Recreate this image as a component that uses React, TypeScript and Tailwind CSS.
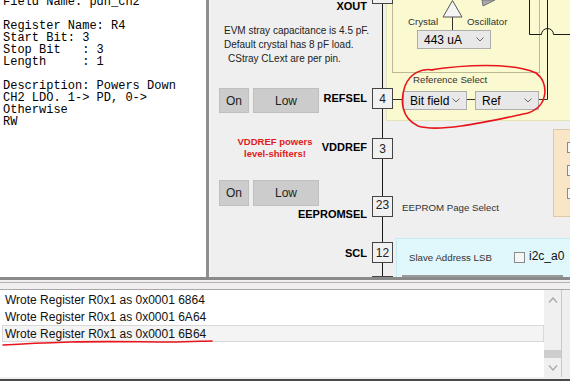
import React from "react";

const regLines = [
  "Field Name: pdn_ch2",
  "",
  "Register Name: R4",
  "Start Bit: 3",
  "Stop Bit   : 3",
  "Length     : 1",
  "",
  "Description: Powers Down",
  "CH2 LDO. 1-> PD, 0->",
  "Otherwise",
  "RW",
];

const logLines = [
  "Wrote Register R0x1 as 0x0001 6864",
  "Wrote Register R0x1 as 0x0001 6A64",
  "Wrote Register R0x1 as 0x0001 6B64",
];

function Chevron() {
  return (
    <svg width="8" height="5" viewBox="0 0 8 5" className="shrink-0">
      <polyline points="0.5,0.5 4,4 7.5,0.5" fill="none" stroke="#666" strokeWidth="1" />
    </svg>
  );
}

function Select({ label, className }: { label: string; className: string }) {
  return (
    <div
      className={`absolute h-[19px] flex items-center justify-between pl-[6px] pr-[6px] bg-[#e8e8e8] border border-[#adadad] text-[12px] text-black ${className}`}
    >
      <span>{label}</span>
      <Chevron />
    </div>
  );
}

function PinBox({ n, top }: { n: string; top: string }) {
  return (
    <div
      className={`absolute left-[162px] w-[21px] h-[21px] bg-[#f1f1f1] border-[1.5px] border-[#444] flex items-center justify-center text-[12px] text-[#222] ${top}`}
    >
      {n}
    </div>
  );
}

function PinLabel({ text, top }: { text: string; top: string }) {
  return (
    <div className={`absolute right-[203px] text-[11px] leading-[13px] font-bold text-black ${top}`}>
      {text}
    </div>
  );
}

function Check({ className }: { className: string }) {
  return <div className={`absolute w-[11px] h-[11px] bg-[#f6f6f6] border border-[#8a8a8a] ${className}`} />;
}

function OnLow({ top, h }: { top: string; h: string }) {
  return (
    <div className={`absolute left-[9px] flex gap-[4px] ${top}`}>
      <div className={`w-[30px] ${h} bg-[#cccccc] border border-[#bfbfbf] flex items-center justify-center text-[12px] text-[#222]`}>On</div>
      <div className={`w-[66px] ${h} bg-[#cccccc] border border-[#bfbfbf] flex items-center justify-center text-[12px] text-[#222]`}>Low</div>
    </div>
  );
}

function Schematic() {
  return (
    <div className="relative flex-1 h-full bg-[#efefef] overflow-hidden text-[#333]">
      {/* left notes */}
      <div className="absolute left-[14px] top-[24px] text-[10px] leading-[14px] text-[#222]">
        <div>EVM stray capacitance is 4.5 pF.</div>
        <div>Default crystal has 8 pF load.</div>
        <div className="pl-[4px]">CStray CLext are per pin.</div>
      </div>

      <OnLow top="top-[88px]" h="h-[25px]" />

      <div className="absolute left-[15px] top-[136px] w-[100px] text-center text-[9.5px] leading-[12px] font-bold text-[#e01b1b]">
        <div>VDDREF powers</div>
        <div>level-shifters!</div>
      </div>

      <OnLow top="top-[180px]" h="h-[26px]" />

      {/* yellow oscillator / reference area */}
      <div className="absolute left-[176px] top-0 w-[200px] h-[121px] bg-[#fbf9d0] border-l border-b border-[#e6e3b4]" />
      <div className="absolute left-[182px] top-[-1px] w-[148px] h-[74px] border border-[#bdb995]" />

      <div className="absolute left-[198px] top-[15px] text-[9.7px] leading-[14px]">Crystal</div>
      <div className="absolute left-[257px] top-[15px] text-[9.7px] leading-[14px]">Oscillator</div>
      <Select label="443 uA" className="left-[207px] top-[30px] w-[74px]" />

      <div className="absolute left-[203px] top-[73px] text-[9.7px] leading-[14px]">Reference Select</div>
      <Select label="Bit field" className="left-[193px] top-[91px] w-[64px]" />
      <Select label="Ref" className="left-[265px] top-[91px] w-[64px]" />

      {/* peach box */}
      <div className="absolute left-[343px] top-[129px] w-[30px] h-[88px] bg-[#f8e6c6] border border-[#dccaa5]" />
      <Check className="left-[357px] top-[142px]" />
      <Check className="left-[357px] top-[165px]" />
      <Check className="left-[357px] top-[188px]" />

      <div className="absolute left-[192px] top-[201px] text-[9.7px] leading-[14px]">EEPROM Page Select</div>

      {/* cyan box */}
      <div className="absolute left-[186px] top-[238px] w-[180px] h-[45px] bg-[#e0f7fc] border-l border-t border-[#c4ebf4]" />
      <div className="absolute left-[199px] top-[251px] text-[9.7px] leading-[14px]">Slave Address LSB</div>
      <Check className="left-[304px] top-[252px]" />
      <div className="absolute left-[319px] top-[249px] text-[12px] leading-[15px] text-[#111]">i2c_a0</div>
      <div className="absolute left-[192px] top-[275px] w-[161px] h-[2px] bg-[#9a9a9a]" />

      {/* wires */}
      <svg className="absolute inset-0 pointer-events-none" width="360" height="277">
        <line x1="172.5" y1="0" x2="172.5" y2="277" stroke="#1a1a1a" strokeWidth="1" />
        <line x1="183" y1="99.5" x2="193" y2="99.5" stroke="#333" strokeWidth="1" />
        <line x1="257" y1="99.5" x2="265" y2="99.5" stroke="#333" strokeWidth="1" />
        <line x1="329" y1="99.5" x2="337.5" y2="99.5" stroke="#333" strokeWidth="1" />
        <line x1="337.5" y1="0" x2="337.5" y2="99.5" stroke="#1a1a1a" strokeWidth="1" />
        <path d="M319.5 0 V34.5 H331.5 A6 6 0 0 1 343.5 34.5 H360" fill="none" stroke="#1a1a1a" strokeWidth="1" />
        <polygon points="242.5,0.5 233,17 252,17" fill="#f4f4f4" stroke="#555" strokeWidth="1" />
        <line x1="242.5" y1="17" x2="242.5" y2="30" stroke="#333" strokeWidth="1" />
        <polygon points="272,0 285,0 273,6" fill="#a8a8a8" stroke="#777" strokeWidth="1" />
      </svg>

      <PinBox n="" top="top-[-17px]" />
      <PinBox n="4" top="top-[88px]" />
      <PinBox n="3" top="top-[138px]" />
      <div className="absolute left-[162px] top-[196px] w-[21px] h-[21px] bg-[#f1f1f1] border-[1.5px] border-[#444] flex justify-center text-[12px] leading-[14px] pt-[1px] text-[#222]">
        23
      </div>
      <PinBox n="12" top="top-[242px]" />
      <PinBox n="" top="top-[276px]" />

      <PinLabel text="XOUT" top="top-[0px]" />
      <PinLabel text="REFSEL" top="top-[92px]" />
      <PinLabel text="VDDREF" top="top-[141px]" />
      <PinLabel text="EEPROMSEL" top="top-[208px]" />
      <PinLabel text="SCL" top="top-[247px]" />
    </div>
  );
}

function LogList() {
  return (
    <div className="flex h-[87px] bg-[#f0eeee]">
      <div className="flex w-[562px] bg-white border-r border-[#c8c8c8]">
        <div className="flex-1 pt-[1px] text-[12px] text-[#111]">
          {logLines.map((l, i) =>
            i === 2 ? (
              <div key={i} className="ml-[2px] h-[17px] flex items-center pl-[2px] bg-[#f4f4f4] border border-[#d8d8d8]">
                {l}
              </div>
            ) : (
              <div key={i} className="h-[17px] flex items-center pl-[5px]">
                {l}
              </div>
            )
          )}
        </div>
        <div className="w-[17px] bg-[#f0f0f0] flex flex-col items-center">
          <svg width="10" height="6" viewBox="0 0 10 6" className="mt-[7px]">
            <polyline points="1,5.5 5,1 9,5.5" fill="none" stroke="#a6a6a6" strokeWidth="1.2" />
          </svg>
          <div className="flex-1" />
          <div className="w-full h-[8px] bg-[#cdcdcd]" />
          <svg width="10" height="6" viewBox="0 0 10 6" className="mt-[7px] mb-[6px]">
            <polyline points="1,0.5 5,5 9,0.5" fill="none" stroke="#a6a6a6" strokeWidth="1.2" />
          </svg>
        </div>
      </div>
    </div>
  );
}

export default function App() {
  return (
    <div className="relative w-[570px] h-[381px] overflow-hidden bg-[#f0eeee] flex flex-col font-['Liberation_Sans',Arial,sans-serif]">
      <div className="flex h-[277px]">
        <div className="w-[206px] h-full bg-white overflow-hidden">
          <div className="mt-[-4px] pl-[3px] font-['Liberation_Mono',monospace] text-[12px] leading-[12px] text-black whitespace-pre">
            {regLines.map((l, i) => (
              <div key={i} className="h-[12px]">
                {l}
              </div>
            ))}
          </div>
        </div>
        <div className="w-[3px] h-full bg-[#8e8e8e]" />
        <div className="w-[1px] h-full bg-[#f6f6f6]" />
        <Schematic />
      </div>
      <div className="h-[3px] bg-[#8a8a8a]" />
      <div className="h-[2px] bg-[#f0eeee]" />
      <div className="h-[1px] bg-[#b4b4b4]" />
      <div className="h-[6px] bg-[#f0eeee]" />
      <div className="h-[1px] bg-[#a8a8a8]" />
      <LogList />
      <div className="h-[2px] bg-[#f0eeee]" />
      <div className="h-[2px] bg-[#4a4a4a]" />

      {/* red hand-drawn annotations */}
      <svg className="absolute inset-0 pointer-events-none" width="570" height="381">
        <path
          d="M433 70 C422 68 410 73 405 86 C400 100 401 118 418 126 C440 133 490 121 528 113 C549 106 549 82 536 73 C512 62 462 65 430 70"
          fill="none"
          stroke="#e8141b"
          strokeWidth="1.6"
          strokeLinecap="round"
        />
        <path
          d="M3 345 C20 344 40 343 70 342 C110 341 140 342 170 342 C190 342 205 341 212 341"
          fill="none"
          stroke="#e8141b"
          strokeWidth="1.6"
          strokeLinecap="round"
        />
      </svg>
    </div>
  );
}
